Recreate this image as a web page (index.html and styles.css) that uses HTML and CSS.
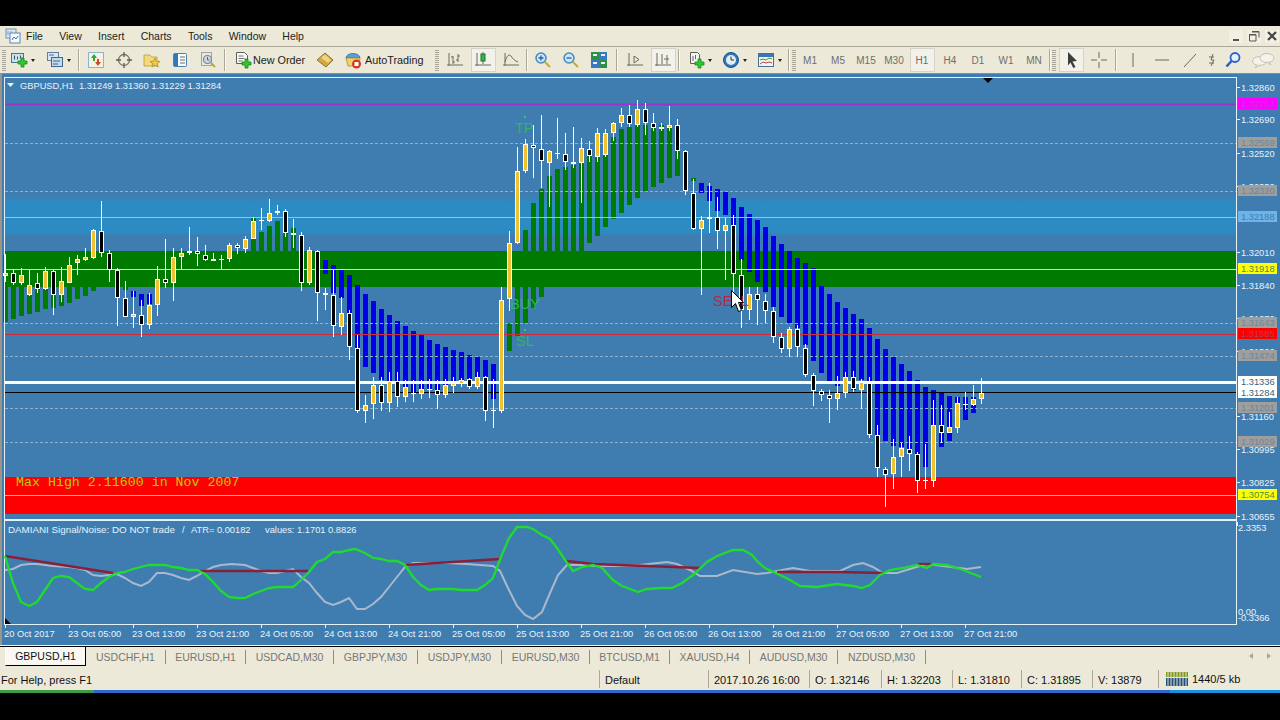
FILE: index.html
```html
<!DOCTYPE html>
<html>
<head>
    <title>MetaTrader 4</title>
    <link rel="stylesheet" href="styles.css">
</head>
<body>
    <div class="topgap"></div>

    <div class="menubar">
        <svg class="appicon" viewBox="0 0 16 16"><rect x="1" y="1" width="10" height="9" fill="#dfe9f2" stroke="#6f93b8"/><rect x="5" y="5" width="10" height="10" fill="#f6f8fb" stroke="#5c86b4"/><path d="M7 12l2-3 2 2 2-3" fill="none" stroke="#3b78b0"/><path d="M3 3v4M6 3v2" stroke="#6f93b8"/></svg>
        <span>File</span>
        <span>View</span>
        <span>Insert</span>
        <span>Charts</span>
        <span>Tools</span>
        <span>Window</span>
        <span>Help</span>
        <div class="winbtns">
            <div class="winbtn"><svg viewBox="0 0 12 12"><path d="M3 9h6v2H3z" fill="#555"/></svg></div>
            <div class="winbtn"><svg viewBox="0 0 12 12"><path d="M4 1.500h7v6M1.500 4.500h6.500v6.500h-6.500z" fill="none" stroke="#555"/><path d="M4 1h7v1.500H4zM1 4h7v1.500H1z" fill="#555"/></svg></div>
            <div class="winbtn"><svg viewBox="0 0 12 12"><path d="M2 2l8 8M10 2l-8 8" stroke="#444" stroke-width="2.200"/></svg></div>
        </div>
    </div>

    <div class="toolbar">
        <div class="grip ml2"></div>

        <div class="tool drop ml4">
            <svg viewBox="0 0 18 18"><rect x="1.500" y="2.500" width="12" height="9" fill="#cfe2ea" stroke="#3f7a8c"/><path d="M4.500 4.500v4M7.500 5.500v3M10.500 4.500v3" stroke="#2a5f72"/><path d="M11 7h3v3h3v3h-3v3h-3v-3H8v-3h3z" fill="#35c436" stroke="#118a1b" stroke-width=".8"/></svg>
            <i class="caret"></i>
        </div>
        <div class="tool drop ml8">
            <svg viewBox="0 0 18 18"><rect x="1.500" y="1.500" width="11" height="8" fill="#dbe6ef" stroke="#5d7f9d"/><rect x="5.500" y="6.500" width="11" height="9" fill="#c6d9ea" stroke="#41688c"/><path d="M3 4h5M7 10h7M7 13h5" stroke="#41688c"/></svg>
            <i class="caret"></i>
        </div>
        <div class="sep ml4"></div>

        <div class="tool ml2">
            <svg viewBox="0 0 18 18"><rect x="1.500" y="1.500" width="15" height="15" fill="#f4f2e2" stroke="#8fb3cd"/><path d="M7 3l3 4H8v3H6V7H4z" fill="#2ca83a"/><path d="M11 15l-3-4h2V8h2v3h2z" fill="#d8452c"/></svg>
        </div>
        <div class="tool">
            <svg viewBox="0 0 18 18"><circle cx="9" cy="9" r="5.500" fill="none" stroke="#77756c" stroke-width="1.300"/><path d="M9 1v5M9 12v5M1 9h5M12 9h5" stroke="#5f5d55" stroke-width="1.300"/></svg>
        </div>
        <div class="tool">
            <svg viewBox="0 0 18 18"><path d="M1 4h6l2 2h5v9H1z" fill="#f3d97a" stroke="#b89a3e" stroke-width=".8"/><path d="M12 7l1.500 3.200 3.500.3-2.700 2.200 1 3.300-3.300-1.900-3 1.900.9-3.300-2.700-2.200 3.400-.3z" fill="#f0cb48" stroke="#a38425" stroke-width=".7"/></svg>
        </div>
        <div class="tool">
            <svg viewBox="0 0 18 18"><rect x="2.500" y="2.500" width="13" height="13" rx="1" fill="#fafbfd" stroke="#4a7fb2"/><rect x="3" y="3" width="4" height="12" fill="#2e78bd"/><path d="M9 6h5M9 9h5M9 12h5" stroke="#6a6a6a"/></svg>
        </div>
        <div class="tool">
            <svg viewBox="0 0 18 18"><rect x="2.500" y="1.500" width="10" height="13" fill="#e6e6e2" stroke="#a4a4a4"/><circle cx="8.500" cy="8.500" r="4" fill="#cfd8e2" stroke="#7d8790" stroke-width="1.200"/><path d="M8.500 6v3h2" fill="none" stroke="#5b6570"/><path d="M12 12l4 4" stroke="#c4a43c" stroke-width="2"/></svg>
        </div>
        <div class="sep ml2"></div>

        <div class="tool wide order ml5">
            <svg viewBox="0 0 18 18"><path d="M2.500 1.500h8l3 3v8h-11z" fill="#f7f7f2" stroke="#5e5e5e"/><path d="M4.500 5h5M4.500 7.500h6M4.500 10h4" stroke="#777"/><path d="M11 8h3v3h3v3h-3v3h-3v-3H8v-3h3z" fill="#35c436" stroke="#118a1b" stroke-width=".8"/></svg>
            <span>New Order</span>
        </div>
        <div class="tool">
            <svg viewBox="0 0 18 18"><path d="M9 2l8 7-7 7-9-7z" fill="#d7a83c" stroke="#6f5a22" stroke-width=".8"/><path d="M9 3.500l6 5.500-3 3-7-5.500z" fill="#ecd38a"/></svg>
        </div>
        <div class="tool wide auto ml2">
            <svg viewBox="0 0 18 18"><path d="M2 7c0-6 14-6 14 0z" fill="#5aa0d8" stroke="#2e6ea8" stroke-width=".8"/><path d="M2 7h14l-1 8H4z" fill="#f1d468" stroke="#aa8b2e" stroke-width=".8"/><circle cx="12.500" cy="13" r="4.500" fill="#d9352a"/><rect x="10.500" y="11" width="4" height="4" fill="#fff"/></svg>
            <span>AutoTrading</span>
        </div>
        <div class="grip ml5"></div>

        <div class="tool ml2">
            <svg viewBox="0 0 18 18" class="gray"><path d="M3 2v13M1 14h16M7 5v8M5 6h2M7 11h2M12 3v8M10 9h2M12 5h2"/></svg>
        </div>
        <div class="tool on">
            <svg viewBox="0 0 18 18" class="gray"><path d="M3 2v13M1 14h16M9 1v12"/><rect x="7" y="3" width="4" height="7" fill="#3bb54a" stroke="#17752a"/></svg>
        </div>
        <div class="tool">
            <svg viewBox="0 0 18 18" class="gray"><path d="M3 2v13M1 14h16M3 11c2-7 4-8 6-6 2 3 4 5 7 6"/></svg>
        </div>
        <div class="sep ml1"></div>

        <div class="tool ml1">
            <svg viewBox="0 0 18 18"><circle cx="7" cy="7" r="5" fill="#cfe4f5" stroke="#3f8ac4" stroke-width="1.500"/><path d="M4.500 7h5M7 4.500v5" stroke="#2468a8" stroke-width="1.400"/><path d="M11 11l5 5" stroke="#c8aa48" stroke-width="2.200"/></svg>
        </div>
        <div class="tool">
            <svg viewBox="0 0 18 18"><circle cx="7" cy="7" r="5" fill="#cfe4f5" stroke="#3f8ac4" stroke-width="1.500"/><path d="M4.500 7h5" stroke="#2468a8" stroke-width="1.400"/><path d="M11 11l5 5" stroke="#c8aa48" stroke-width="2.200"/></svg>
        </div>
        <div class="tool">
            <svg viewBox="0 0 18 18"><rect x="1" y="1" width="8" height="8" fill="#2f8f4a"/><rect x="9" y="1" width="8" height="8" fill="#3a78c2"/><rect x="1" y="9" width="8" height="8" fill="#3a78c2"/><rect x="9" y="9" width="8" height="8" fill="#2f8f4a"/><path d="M3 4h4M11 4h4M3 12h4M11 12h4" stroke="#e8f0e8" stroke-width="2"/></svg>
        </div>
        <div class="sep ml3"></div>

        <div class="tool ml3">
            <svg viewBox="0 0 18 18" class="gray"><path d="M3 2v13M1 14h16"/><path d="M8 5l5 3.500-5 3.500z" fill="#cfe9d0" stroke="#2f9a3e"/></svg>
        </div>
        <div class="tool on">
            <svg viewBox="0 0 18 18" class="gray"><path d="M3 2v13M1 14h16M8 3v10M13 4v9"/><path d="M10 8h5" stroke="#c8382e" stroke-width="1.500"/></svg>
        </div>
        <div class="sep ml1"></div>

        <div class="tool drop ml7">
            <svg viewBox="0 0 18 18"><path d="M3.500 1.500h7l2 2v9h-9z" fill="#f5f5f0" stroke="#5e5e5e"/><path d="M6 5v5M8.500 4v4" stroke="#666"/><path d="M11 8h3v3h3v3h-3v3h-3v-3H8v-3h3z" fill="#35c436" stroke="#118a1b" stroke-width=".8"/></svg>
            <i class="caret"></i>
        </div>
        <div class="tool drop ml7">
            <svg viewBox="0 0 18 18"><circle cx="9" cy="9" r="7.500" fill="#2f78c0" stroke="#17508c"/><circle cx="9" cy="9" r="5" fill="#e4edf5"/><path d="M9 5.500V9h3" fill="none" stroke="#333"/></svg>
            <i class="caret"></i>
        </div>
        <div class="tool drop ml7">
            <svg viewBox="0 0 18 18"><rect x="1.500" y="2.500" width="15" height="13" fill="#f3f3ee" stroke="#4b6f93"/><rect x="2" y="3" width="14" height="3" fill="#3f75ae"/><path d="M3 9l3-1 3 1 3-2 3 1" fill="none" stroke="#2e9a4a"/><path d="M3 13l3-2 3 1 3-1 3 1" fill="none" stroke="#b5493a"/></svg>
            <i class="caret"></i>
        </div>
        <div class="sep ml3"></div>
        <div class="grip ml2"></div>

        <div class="tool tf">M1</div>
        <div class="tool tf">M5</div>
        <div class="tool tf">M15</div>
        <div class="tool tf">M30</div>
        <div class="tool tf on">H1</div>
        <div class="tool tf">H4</div>
        <div class="tool tf">D1</div>
        <div class="tool tf">W1</div>
        <div class="tool tf">MN</div>
        <div class="sep ml1"></div>
        <div class="grip ml1"></div>

        <div class="tool on pointer">
            <svg viewBox="0 0 18 18"><path d="M5 1l9 9-4.500.5 3 5.500-2.200 1-2.800-5.500L5 14.500z" fill="#3c3c3c"/></svg>
        </div>
        <div class="tool ml1">
            <svg viewBox="0 0 18 18" class="gray"><path d="M9 1v6M9 11v6M1 9h6M11 9h6"/></svg>
        </div>
        <div class="sep ml2"></div>
        <div class="tool ml2">
            <svg viewBox="0 0 18 18" class="gray"><path d="M9 2v14"/></svg>
        </div>
        <div class="tool ml1">
            <svg viewBox="0 0 18 18" class="gray"><path d="M2 9h14"/></svg>
        </div>
        <div class="tool">
            <svg viewBox="0 0 18 18" class="gray"><path d="M3 16L15 3"/></svg>
        </div>
        <div class="tool narrow16">
            <svg viewBox="0 0 18 18" class="gray"><path d="M10 3L8 9h3l-3 6M6 6h5M6 12h5"/></svg>
        </div>
        <div class="tool narrow26">
            <svg viewBox="0 0 18 18"><circle cx="11" cy="6.500" r="4.500" fill="#e6f0fa" stroke="#2a62c8" stroke-width="1.800"/><path d="M7.500 10L2.500 15.500" stroke="#2a62c8" stroke-width="2.600"/></svg>
        </div>
        <div class="tool chat ml3">
            <svg viewBox="0 0 24 18"><ellipse cx="8.500" cy="10" rx="7" ry="4.500" fill="#f4f3ea" stroke="#c2c1b6"/><ellipse cx="16" cy="7" rx="7" ry="4.500" fill="#f4f3ea" stroke="#c2c1b6"/><path d="M6 14l-2 3 5-3M18 11l2 3-4-3" fill="#f4f3ea" stroke="#c2c1b6"/></svg>
        </div>
    </div>

    <svg id="chart" class="chart" viewBox="0 74 1280 571" width="1280" height="571"></svg>

    <div class="tabbar">
        <div class="tab active">GBPUSD,H1</div>
        <div class="tab w80">USDCHF,H1</div>
        <div class="tab w80">EURUSD,H1</div>
        <div class="tab w88">USDCAD,M30</div>
        <div class="tab w84">GBPJPY,M30</div>
        <div class="tab w84">USDJPY,M30</div>
        <div class="tab w88">EURUSD,M30</div>
        <div class="tab w80">BTCUSD,M1</div>
        <div class="tab w80">XAUUSD,H4</div>
        <div class="tab w88">AUDUSD,M30</div>
        <div class="tab w88">NZDUSD,M30</div>
        <div class="tabarrows"><i class="arrow left"></i><i class="arrow right"></i></div>
    </div>

    <div class="statusbar">
        <div class="cell help">For Help, press F1</div>
        <div class="cell c109">Default</div>
        <div class="cell c101">2017.10.26 16:00</div>
        <div class="cell c72">O: 1.32146</div>
        <div class="cell c71">H: 1.32203</div>
        <div class="cell c69">L: 1.31810</div>
        <div class="cell c71">C: 1.31895</div>
        <div class="cell c66">V: 13879</div>
        <div class="cell conn">
            <svg viewBox="0 0 24 16" width="24" height="16"><path d="M1 1h22v5H1z" fill="#7f9a1f"/><path d="M1 7h22v8H1z" fill="#1f4f7f"/><path d="M3 0v16M6 0v16M9 0v16M12 0v16M15 0v16M18 0v16M21 0v16" stroke="#e6e3d3"/></svg>
            1440/5 kb
        </div>
    </div>

    <div class="taskstrip">
        <div class="start"></div>
        <div class="task"></div>
        <div class="tray"></div>
    </div>

    <script src="app.js"></script>
</body>
</html>
```

FILE: styles.css
```css
html, body { margin: 0; padding: 0; background: #000; }
body { width: 1280px; height: 720px; overflow: hidden; font-family: "Liberation Sans", Arial, sans-serif; display: flex; flex-direction: column; }

.topgap { height: 26px; background: #000; }

.menubar { height: 20px; background: #ece9d8; display: flex; align-items: center; gap: 16.3px; font-size: 10.5px; color: #222; border-bottom: 1px solid #aca899; position: relative; }
.appicon { width: 16px; height: 16px; margin: 0 -11.3px 0 5px; }
.winbtns { margin-left: auto; display: flex; gap: 4px; margin-right: 1px; }
.winbtn { width: 14px; height: 13px; background: #f2f0e4; display: flex; align-items: center; justify-content: center; }
.winbtn svg { width: 12px; height: 12px; }

.toolbar { height: 26px; background: #ece9d8; display: flex; align-items: center; border-bottom: 1px solid #8f8d80; }
.toolbar svg { width: 18px; height: 18px; flex: none; }
.grip { width: 4px; height: 21px; background: repeating-linear-gradient(to bottom, #a8a699 0, #a8a699 1px, #ece9d8 1px, #ece9d8 2px); }
.sep { width: 1px; height: 22px; background: #aca899; border-right: 1px solid #f8f7f0; }

.tool { width: 28px; height: 24px; display: flex; align-items: center; justify-content: center; flex: none; box-sizing: border-box; }
.tool.drop { justify-content: flex-start; }
.tool.on { width: 25px; margin: 0 1.5px; background: #f3f2ea; border: 1px solid #d6d4c8; }
.tool.wide { justify-content: flex-start; font-size: 10.8px; color: #222; white-space: nowrap; }
.tool.order { width: 80px; padding-left: 3px; gap: 1px; }
.tool.auto { width: 89px; padding-left: 3px; gap: 3px; }
.tool.tf { font-size: 10px; color: #6e6e6e; }
.tool.pointer { margin: 0 0 0 3px; }
.tool.narrow26 { width: 26px; }
.tool.narrow16 { width: 16px; }
.tool.chat svg { width: 24px; }
.caret { width: 0; height: 0; border-left: 2.5px solid transparent; border-right: 2.5px solid transparent; border-top: 3px solid #222; margin-left: 3px; flex: none; }
.gray path { fill: none; stroke: #6a6a60; stroke-width: 1; }

.ml1 { margin-left: 1px; }
.ml2 { margin-left: 2px; }
.ml3 { margin-left: 3px; }
.ml4 { margin-left: 4px; }
.ml5 { margin-left: 5px; }
.ml7 { margin-left: 7px; }
.ml8 { margin-left: 8px; }

.chart { display: block; flex: none; }
.chart text { font-family: "Liberation Sans", Arial, sans-serif; font-size: 9.300px; white-space: pre; }
.pane { fill: #3f7db1; }
.edge { fill: #9c968a; }
.frame { fill: #e6f2fa; }
.sky { fill: url(#skyfade); }
.bull-zone { fill: #007a00; }
.bear-zone { fill: #ff0000; }
.bar-green { fill: #007a00; }
.bar-blue { fill: #0000e6; }
.hline-purple { stroke: #9a34cc; stroke-width: 2; }
.hline-dash { stroke: #8fb2d0; stroke-dasharray: 3 2; }
.hline-sky { stroke: #84c8f2; }
.hline-yellow { stroke: #d8ff3c; }
.hline-red { stroke: #cc2c3c; }
.hline-white { stroke: #fff; stroke-width: 3; }
.hline-black { stroke: #000; }
.hline-orange { stroke: #f6c020; }
.wick { fill: #fff; }
.up { fill: #eec230; stroke: #fff; }
.down { fill: #000; stroke: #fff; }
.tick { fill: #e6f2fa; }
.axis-text { fill: #e8f2fa; }
.legend { fill: #e8f2fa; }
.legend-wide { fill: #e8f2fa; font-size: 9.800px !important; }
.maxhigh { fill: #bccc00; font-family: "Liberation Mono", monospace !important; font-size: 13.300px !important; }
.trade-green { fill: #2fb658; font-size: 14.500px !important; }
.trade-red { fill: #b22a4c; font-size: 14.500px !important; }
.dot-green { fill: #2fd060; }
.noise { fill: none; stroke: #aab8cc; stroke-width: 2; }
.signal { fill: none; stroke: #1fdc2c; stroke-width: 2.300; }
.flat { fill: none; stroke: #8a2038; stroke-width: 2.300; }
.marker { fill: #000; }
.cursor { fill: #fff; stroke: #000; }

.tag-magenta { fill: #ff00ff; }
.tag-gray { fill: #9e9e9e; }
.tag-sky { fill: #6fb4e8; }
.tag-yellow { fill: #ffff00; }
.tag-red { fill: #f00; }
.tag-white { fill: #fff; }
.tagtext-magenta { fill: #c03ae0; }
.tagtext-gray { fill: #6f8699; }
.tagtext-sky { fill: #3f7db1; }
.tagtext-yellow { fill: #4f8a4a; }
.tagtext-red { fill: #b0404c; }
.tagtext-white { fill: #3a5f80; }

.tabbar { height: 23px; box-sizing: border-box; background: #ece9d8; border-top: 1px solid #f1f3ee; box-shadow: inset 0 1px #000; display: flex; font-size: 10.5px; color: #777; align-items: flex-start; position: relative; }
.tab { height: 14px; margin-top: 4px; display: flex; align-items: center; justify-content: center; box-sizing: border-box; border-right: 1px solid #8d8b7e; flex: none; }
.tab.active { width: 81px; height: 19px; margin: 1px 0 0 5px; background: #f9f8f2; color: #111; border-right: 1px solid #000; border-bottom: 1px solid #000; border-left: 1px solid #fff; }
.tab.w80 { width: 80px; }
.tab.w84 { width: 84px; }
.tab.w88 { width: 88px; }
.tabarrows { position: absolute; right: 9px; top: 7px; display: flex; gap: 14px; }
.arrow { width: 0; height: 0; border-top: 3.500px solid transparent; border-bottom: 3.500px solid transparent; }
.arrow.left { border-right: 4px solid #a8a69a; }
.arrow.right { border-left: 4px solid #a8a69a; }

.statusbar { height: 22px; box-sizing: border-box; background: #ece9d8; display: flex; font-size: 11px; color: #111; align-items: center; }
.cell { height: 18px; line-height: 20px; box-sizing: border-box; border-right: 1px solid #aca899; padding-left: 5px; white-space: nowrap; flex: none; }
.cell.help { width: 600px; padding-left: 1px; }
.c109 { width: 109px; }
.c101 { width: 101px; }
.c72 { width: 72px; }
.c71 { width: 71px; }
.c69 { width: 69px; }
.c66 { width: 66px; }
.cell.conn { border-right: none; padding-left: 6px; display: flex; align-items: center; gap: 3px; }

.taskstrip { height: 3px; display: flex; }
.start { width: 94px; background: #3f9a46; }
.task { width: 1076px; background: #2f66cf; }
.tray { width: 110px; background: #1490e6; }
```

FILE: app.js
```js
// chart data read off the terminal: [type, wickTop, bodyTop, bodyBottom, wickBottom] in screen px
const candles = [
    ['y',254,273,276,282],['b',269,273,283,285],['y',268,275,283,285],['y',270,285,295,296],['b',273,283,289,293],
    ['y',267,271,289,290],['b',269,271,295,315],['y',267,281,295,302],['y',257,265,283,283],['y',255,259,263,275],
    ['y',248,257,260,261],['y',229,230,258,259],['b',201,231,253,257],['b',250,253,270,282],['b',268,270,298,326],
    ['b',281,298,317,317],['y',291,314,317,328],['b',300,315,325,337],['y',293,305,325,329],['y',266,279,305,316],
    ['b',239,279,283,288],['y',248,257,283,301],['y',248,253,257,269],['y',227,251,253,255],['b',237,251,254,266],
    ['b',245,255,260,261],['y',253,259,261,261],['d',255,259,259,269],['y',243,245,259,262],['b',243,245,248,254],
    ['y',236,239,249,253],['y',217,221,239,239],['d',208,220,220,230],['y',199,213,221,222],['y',205,211,213,215],
    ['b',209,211,233,237],['b',219,233,235,248],['b',232,235,283,291],['y',247,250,283,285],['b',250,251,293,321],
    ['b',288,293,295,310],['b',270,295,326,337],['y',297,313,327,335],['b',310,313,347,360],['b',335,348,411,413],
    ['y',395,405,411,423],['y',377,385,404,419],['b',377,385,403,411],['y',372,381,403,412],['b',372,381,397,407],
    ['y',380,387,397,402],['d',380,393,393,402],['y',380,389,394,399],['d',379,389,389,398],['b',380,390,395,409],
    ['y',379,385,395,398],['y',377,383,386,393],['y',378,380,384,387],['b',378,379,387,389],['y',372,377,387,389],
    ['b',376,377,411,421],['d',379,410,410,428],['y',287,300,411,413],['y',231,243,299,311],['y',147,171,243,244],
    ['y',139,144,171,173],['b',125,145,148,178],['b',115,149,161,188],['y',150,151,163,207],['d',118,153,153,159],
    ['b',133,154,162,170],['b',127,162,163,168],['y',138,148,163,203],['b',141,149,156,162],['y',128,133,157,162],
    ['y',129,133,155,157],['y',122,123,133,141],['y',108,115,123,127],['b',105,115,124,127],['y',100,109,125,127],
    ['b',103,109,123,135],['b',113,123,128,131],['y',123,127,129,131],['y',106,125,128,131],['b',119,125,151,159],
    ['b',150,151,191,195],['b',179,193,229,230],['y',216,220,229,295],['y',183,217,219,233],['b',197,217,231,249],
    ['y',218,225,231,280],['b',215,225,274,297],['b',259,275,310,328],['y',287,294,310,320],['b',287,294,300,325],
    ['b',294,301,311,323],['b',307,311,337,343],['b',333,337,349,353],['y',327,329,349,357],['b',325,329,347,357],
    ['b',344,348,375,377],['b',373,375,391,406],['b',389,391,395,401],['b',390,395,399,423],['y',376,393,399,410],
    ['y',372,377,393,398],['b',371,377,389,392],['y',379,382,390,409],['b',377,383,435,438],['b',425,435,468,477],
    ['b',467,469,475,507],['y',439,457,474,489],['y',443,448,457,477],['b',436,449,454,471],['b',452,454,481,493],
    ['d',444,480,480,489],['y',400,425,481,487],['b',405,425,433,443],['y',412,427,433,433],['y',397,403,428,433],
    ['d',392,404,404,410],['y',385,399,405,406],['y',378,393,399,404]
];

// histogram bars as [candle index, top, bottom]
const greenBars = [
    [0,255,322],[1,255,319],[2,255,316],[3,255,314],[4,255,312],[5,255,309],[6,255,308],[7,255,306],[8,255,303],[9,255,299],
    [10,255,296],[11,255,291],[15,285,290],[31,217,255],[32,232,255],[33,226,255],[34,221,255],[35,215,255],[36,228,255],
    [63,323,351],[64,287,336],[65,230,323],[66,203,308],[67,189,297],[68,176,270],[69,169,270],[70,167,270],[71,165,270],[72,157,255],
    [73,153,243],[74,157,236],[75,145,227],[76,137,219],[77,129,213],[78,127,205],[79,125,198],[80,125,191],[81,127,187],[82,125,183],
    [83,128,178],[84,150,176],[86,178,181]
];
const blueBars = [
    [16,291,297],[17,294,306],[18,294,304],[40,260,274],[41,265,293],[42,270,298],[43,275,313],[44,285,348],[45,294,367],
    [46,301,373],[47,309,380],[48,315,381],[49,321,383],[50,326,390],[51,331,392],[52,335,390],[53,340,390],[54,344,390],
    [55,347,387],[56,350,383],[57,352,380],[58,355,380],[59,357,377],[60,360,377],[61,364,399],
    [87,183,193],[88,186,201],[89,189,211],[90,192,215],[91,198,226],[92,207,260],[93,214,272],[94,220,282],[95,227,292],
    [96,236,307],[97,244,317],[98,251,323],[99,258,328],[100,263,345],[101,268,361],[102,286,373],[103,294,382],[104,302,386],
    [105,308,393],[106,314,390],[107,319,380],[108,328,424],[109,339,435],[110,349,441],[111,357,446],[112,364,447],
    [113,371,450],[114,380,454],[115,387,467],[116,390,425],[117,393,447],[118,396,441],[119,397,420],[120,397,420],[121,397,413]
];

const signalLine = '5,556 13,583 21,602 29,606 37,602 45,590 53,578 61,576 69,577 77,583 85,589 93,590 101,583 109,577 117,573 125,572 133,569 141,567 149,565 157,565 165,565 173,567 181,568 189,570 197,570 205,574 213,582 221,591 229,597 237,598 245,598 253,594 261,591 269,588 277,587 285,587 293,587 301,580 309,572 317,562 325,559 333,552 341,552 349,550 355,549 365,553 373,558 381,559 389,561 397,561 405,565 413,577 421,585 429,590 437,589 445,589 453,589 461,590 469,590 477,590 485,585 493,578 501,557 509,538 517,527 527,527 533,529 542,535 550,539 557,548 565,560 573,571 582,567 593,565 602,568 613,580 622,586 630,589 638,592 647,589 660,588 672,588 682,583 693,575 707,562 717,556 733,550 743,550 752,555 758,562 765,568 780,575 790,580 800,586 817,587 837,584 853,586 862,588 870,585 880,575 890,570 903,568 917,565 927,568 933,564 947,565 963,570 981,577';
const noiseLine = '5,570 13,569 21,565 29,564 37,564 45,565 53,566 69,567 77,568 85,570 93,575 101,576 109,575 117,574 125,578 133,583 141,586 149,582 157,573 165,573 173,575 181,578 189,580 197,576 205,571 213,567 221,565 232,564 245,565 253,568 261,571 269,573 277,573 285,571 293,569 301,577 309,583 317,593 325,602 333,605 341,602 349,598 357,609 365,609 373,604 381,597 389,587 397,577 405,567 413,563 427,563 447,563 467,564 493,566 500,571 508,588 517,606 525,615 533,619 542,612 550,593 558,575 567,565 580,565 593,566 617,566 640,565 667,562 677,564 690,570 700,576 717,576 733,570 757,574 767,573 777,571 793,568 810,571 840,571 853,565 863,563 873,567 883,573 897,573 913,568 927,564 943,566 967,569 981,567';
const flatLines = [
    '5,556 113,573', '200,571 308,571', '405,565 500,559',
    '567,561 593,564 700,568', '777,572 837,572 883,573', '918,564 932,564'
];

const axisPrices = [
    ['1.32860',87],['1.32690',119],['1.32520',153],['1.32350',186],['1.32010',252],['1.31840',285],
    ['1.31670',318],['1.31500',351],['1.31160',416],['1.30995',449],['1.30825',482],['1.30655',516]
];
const tags = [
    ['1.32753',104,'magenta'],['1.32569',143,'gray'],['1.32320',191,'gray'],['1.32188',217,'sky'],
    ['1.31918',269,'yellow'],['1.31643',323,'gray'],['1.31585',334,'red'],['1.31474',356,'gray'],
    ['1.31336',382,'white'],['1.31284',393,'white'],['1.31201',408,'gray'],['1.31029',442,'gray'],
    ['1.30754',495,'yellow']
];
const timeLabels = [
    '20 Oct 2017','23 Oct 05:00','23 Oct 13:00','23 Oct 21:00','24 Oct 05:00','24 Oct 13:00','24 Oct 21:00','25 Oct 05:00',
    '25 Oct 13:00','25 Oct 21:00','26 Oct 05:00','26 Oct 13:00','26 Oct 21:00','27 Oct 05:00','27 Oct 13:00','27 Oct 21:00'
];

function rect(cls, x, y, w, h) {
    return `<rect class="${cls}" x="${x}" y="${y}" width="${w}" height="${h}"/>`;
}
function hline(cls, y) {
    return `<path class="${cls}" d="M5 ${y}H1236"/>`;
}
function text(cls, x, y, str) {
    return `<text class="${cls}" x="${x}" y="${y}">${str}</text>`;
}
function candleX(i) {
    return Math.round(5.33 + 8 * i);
}

let out = '<defs><linearGradient id="skyfade" x1="0" y1="0" x2="0" y2="1">' +
    '<stop offset="0" stop-color="#3f7db1"/><stop offset=".2" stop-color="#2d8bc4"/>' +
    '<stop offset=".92" stop-color="#2d8bc4"/><stop offset="1" stop-color="#3a80b5"/></linearGradient></defs>';

// backgrounds
out += rect('pane', 0, 74, 1280, 571);
out += rect('edge', 0, 74, 2, 571);

// zones
out += rect('sky', 5, 195, 1231, 40);
out += rect('bull-zone', 5, 251, 1231, 36);
out += rect('bear-zone', 5, 477, 1231, 37);

// histogram
greenBars.forEach(b => { out += rect('bar-green', candleX(b[0]) - 2, b[1], 5, b[2] - b[1]); });
blueBars.forEach(b => { out += rect('bar-blue', candleX(b[0]) - 2, b[1], 5, b[2] - b[1]); });

// levels
out += hline('hline-purple', 104.5);
[143.5, 191.5, 323.5, 356.5, 408.5, 442.5].forEach(y => { out += hline('hline-dash', y); });
out += hline('hline-sky', 217.5);
out += hline('hline-yellow', 269.5);
out += hline('hline-red', 334.5);
out += hline('hline-white', 382.5);
out += hline('hline-black', 392.5);
out += hline('hline-orange', 495.5);

// candles
candles.forEach((c, i) => {
    const x = candleX(i);
    out += rect('wick', x, c[1], 1, c[4] - c[1]);
    if (c[0] === 'd') {
        out += rect('wick', x - 2, c[2], 5, 1);
    } else {
        out += rect(c[0] === 'y' ? 'up' : 'down', x - 1.5, c[2] + 0.5, 4, Math.max(c[3] - c[2] - 1, 1));
    }
});

// trade labels
out += text('trade-green', 515, 133, 'TP');
out += text('trade-green', 510, 309, 'BUY');
out += text('trade-green', 516, 346, 'SL');
out += text('trade-red', 713, 306, 'SELL');
out += rect('dot-green', 524, 116, 2, 2);
out += rect('dot-green', 524, 329, 2, 2);
out += text('maxhigh', 16, 486, 'Max High 2.11600 in Nov 2007');

// legend and frame
out += '<path class="legend" d="M7 83h7l-3.500 4z"/>';
out += text('legend', 20, 89, 'GBPUSD,H1  1.31249 1.31360 1.31229 1.31284');
out += rect('frame', 4, 77, 1232, 1);
out += rect('frame', 4, 77, 1, 547);
out += rect('frame', 1236, 77, 1, 547);
out += rect('frame', 4, 519, 1232, 2);
out += rect('frame', 4, 624, 1233, 1);
out += '<path class="marker" d="M983 78h10l-5 5z"/>';

// indicator window
out += text('legend-wide', 8, 533, 'DAMIANI Signal/Noise: DO NOT trade');
out += text('legend', 182, 533, '/');
out += text('legend', 191, 533, 'ATR= 0.00182');
out += text('legend', 265, 533, 'values: 1.1701 0.8826');
out += `<polyline class="noise" points="${noiseLine}"/>`;
flatLines.forEach(p => { out += `<polyline class="flat" points="${p}"/>`; });
out += `<polyline class="signal" points="${signalLine}"/>`;
out += '<path class="marker" d="M5 618l6 6H5z"/>';

// price axis
axisPrices.forEach(p => {
    out += rect('tick', 1237, p[1], 3, 1);
    out += text('axis-text', 1241, p[1] + 3.5, p[0]);
});
tags.forEach(t => {
    out += rect('tag-' + t[2], 1238, t[1] - 6, 39, 11);
    out += text('tagtext-' + t[2], 1241, t[1] + 3, t[0]);
});
out += text('axis-text', 1238, 531, '2.3353');
out += text('axis-text', 1238, 615, '0.00');
out += text('axis-text', 1238, 621, '-0.3366');
out += rect('tick', 1237, 522, 1, 4);

// time axis
timeLabels.forEach((label, i) => {
    const x = i === 0 ? 5 : 69 + 64 * (i - 1);
    out += rect('tick', x, 624, 1, 4);
    out += text('axis-text', i === 0 ? 4 : x - 1, 637, label);
});

// mouse pointer
out += '<path class="cursor" d="M731.500 290.500v17l4-4 3 8 3-1-3-8h5z"/>';

document.getElementById('chart').innerHTML = out;
```
